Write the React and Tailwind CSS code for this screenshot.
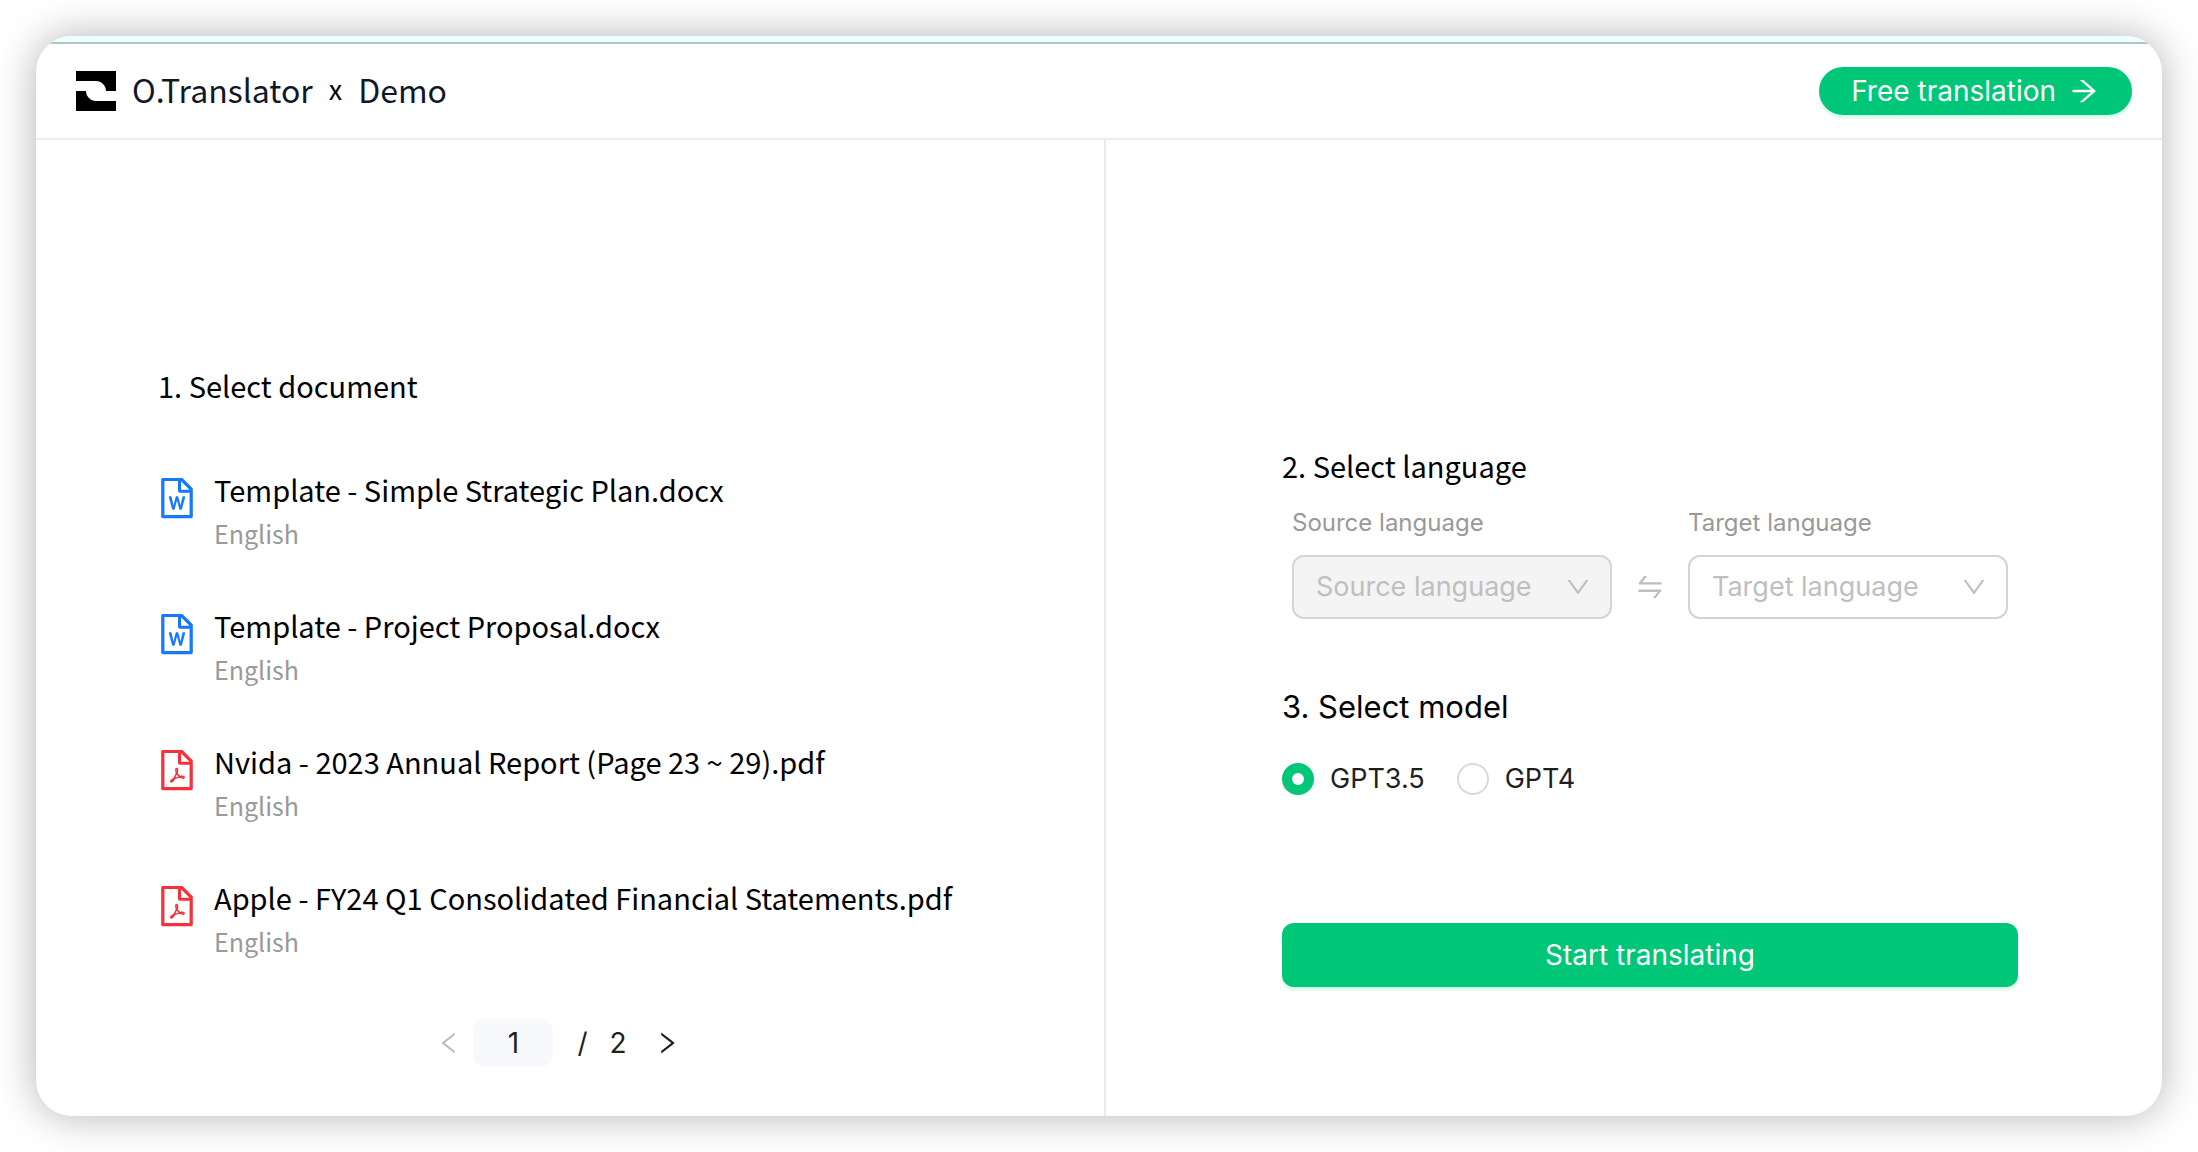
import { useState } from 'react';
import {
  AiOutlineArrowRight,
  AiOutlineDown,
  AiOutlineFilePdf,
  AiOutlineFileWord,
  AiOutlineLeft,
  AiOutlineRight,
  AiOutlineSwap,
} from 'react-icons/ai';
import { clsx } from 'clsx';

const DOCUMENTS = [
  { name: 'Template - Simple Strategic Plan.docx', language: 'English', type: 'word' },
  { name: 'Template - Project Proposal.docx', language: 'English', type: 'word' },
  { name: 'Nvida - 2023 Annual Report (Page 23 ~ 29).pdf', language: 'English', type: 'pdf' },
  { name: 'Apple - FY24 Q1 Consolidated Financial Statements.pdf', language: 'English', type: 'pdf' },
];

const MODELS = ['GPT3.5', 'GPT4'];

function Logo() {
  return (
    <svg viewBox="0 0 40 40" className="size-10 shrink-0" aria-hidden="true">
      <path d="M0 0h40v20H30C30 14.500 25.500 10 20 10H0z" />
      <path d="M0 40h40V30H20C14.500 30 10 25.500 10 20H0z" />
    </svg>
  );
}

function Header() {
  return (
    <header className="flex h-24 items-center justify-between border-b-2 border-[#ebebeb] pl-10 pr-[30px]">
      <a href="#" className="flex items-start font-['Noto_Sans_CJK_SC',sans-serif] text-gray-900">
        <Logo />
        <span className="ml-4 text-[32px] leading-9">O.Translator</span>
        <span className="mx-4 text-[27px] leading-9 text-black">x</span>
        <span className="text-[32px] leading-9">Demo</span>
      </a>
      <button
        type="button"
        className="flex h-12 items-center gap-3 rounded-full bg-[#00c677] px-8 text-[28px] text-white shadow-[0_4px_0_#e0ffef] cursor-pointer"
      >
        Free translation
        <AiOutlineArrowRight size={32} />
      </button>
    </header>
  );
}

function DocumentItem({ doc }) {
  const Icon = doc.type === 'word' ? AiOutlineFileWord : AiOutlineFilePdf;

  return (
    <li>
      <button type="button" className="flex items-start text-left cursor-pointer">
        <Icon
          size={46}
          className={clsx('mt-2.5 shrink-0', doc.type === 'word' ? 'text-[#1677ff]' : 'text-[#f5323c]')}
        />
        <span className="ml-3.5 flex flex-col">
          <span className="text-[29px] leading-12 text-black">{doc.name}</span>
          <span className="text-[25px] leading-10 text-[#999]">{doc.language}</span>
        </span>
      </button>
    </li>
  );
}

function Pagination() {
  const [page, setPage] = useState('1');

  return (
    <nav className="flex items-center justify-center text-[28px] text-[#1f1f1f]" aria-label="Pages">
      <button type="button" disabled className="text-[#bfbfbf]" aria-label="Previous page">
        <AiOutlineLeft size={28} />
      </button>
      <input
        value={page}
        onChange={(e) => setPage(e.target.value)}
        aria-label="Page"
        className="ml-2.5 h-12 w-20 rounded-xl bg-[#f8f9fc] text-center outline-none"
      />
      <span className="ml-6">/</span>
      <span className="ml-5.5">2</span>
      <button type="button" className="ml-6.5 cursor-pointer" aria-label="Next page">
        <AiOutlineRight size={28} />
      </button>
    </nav>
  );
}

function LanguageSelect({ id, label, disabled }) {
  return (
    <div className="flex w-80 flex-col">
      <label htmlFor={id} className="text-2xl leading-8 text-[#999]">{label}</label>
      <div className="relative mt-4">
        <select
          id={id}
          disabled={disabled}
          className={clsx(
            'h-16 w-full appearance-none rounded-xl border-2 border-[#d4d4d4] px-[22px] text-[27px] text-[#bfbfbf] opacity-100 outline-none',
            disabled ? 'bg-[#f4f4f4]' : 'bg-white'
          )}
        >
          <option>{label}</option>
        </select>
        <AiOutlineDown size={28} className="pointer-events-none absolute right-5 top-4.5 text-[#bfbfbf]" />
      </div>
    </div>
  );
}

function ModelRadio({ name, checked, onChange }) {
  return (
    <label className="flex items-center gap-4 text-[27px] leading-10 text-[#1f1f1f] cursor-pointer">
      <input
        type="radio"
        name="model"
        value={name}
        checked={checked}
        onChange={onChange}
        className="size-8 appearance-none rounded-full border-2 border-[#d9d9d9] bg-white checked:border-[10px] checked:border-[#00c677]"
      />
      {name}
    </label>
  );
}

export default function App() {
  const [model, setModel] = useState(MODELS[0]);

  return (
    <div className="flex min-h-screen flex-col bg-white p-9 font-['Inter',sans-serif]">
      <div className="flex grow flex-col overflow-hidden rounded-[36px] bg-white shadow-[0_0_40px_rgba(0,0,0,0.3)]">
        <div className="h-2 border-b-2 border-[#b0c8c5] bg-[#effffe]" />
        <Header />

        <main className="grid grow grid-cols-[1070px_1fr]">
          {/* Documents */}
          <section className="flex flex-col justify-end border-r-2 border-[#ebebeb] pb-[49px] pl-[118px] pr-[142px]">
            <div className="font-['Noto_Sans_CJK_SC',sans-serif]">
              <h2 className="px-1 text-[29px] leading-12 text-black">1. Select document</h2>
              <ul className="mt-14 flex flex-col gap-12">
                {DOCUMENTS.map((doc) => (
                  <DocumentItem key={doc.name} doc={doc} />
                ))}
              </ul>
            </div>
            <div className="mt-14.5">
              <Pagination />
            </div>
          </section>

          {/* Translation settings */}
          <section className="flex flex-col justify-end pb-[129px] pl-44 pr-36">
            <h2 className="font-['Noto_Sans_CJK_SC',sans-serif] text-[29px] leading-12 text-black">2. Select language</h2>
            <div className="mt-4.5 flex items-end justify-between px-2.5">
              <LanguageSelect id="source" label="Source language" disabled />
              <AiOutlineSwap size={32} className="mb-4 text-[#bfbfbf]" />
              <LanguageSelect id="target" label="Target language" />
            </div>
            <h2 className="mt-16 text-[31px] leading-12 text-black">3. Select model</h2>
            <div className="mt-7 flex gap-8">
              {MODELS.map((name) => (
                <ModelRadio key={name} name={name} checked={model === name} onChange={() => setModel(name)} />
              ))}
            </div>
            <button
              type="button"
              className="mt-31 h-16 rounded-xl bg-[#00c677] text-[28px] text-white shadow-[0_4px_0_#e0ffef] cursor-pointer"
            >
              Start translating
            </button>
          </section>
        </main>
      </div>
    </div>
  );
}
